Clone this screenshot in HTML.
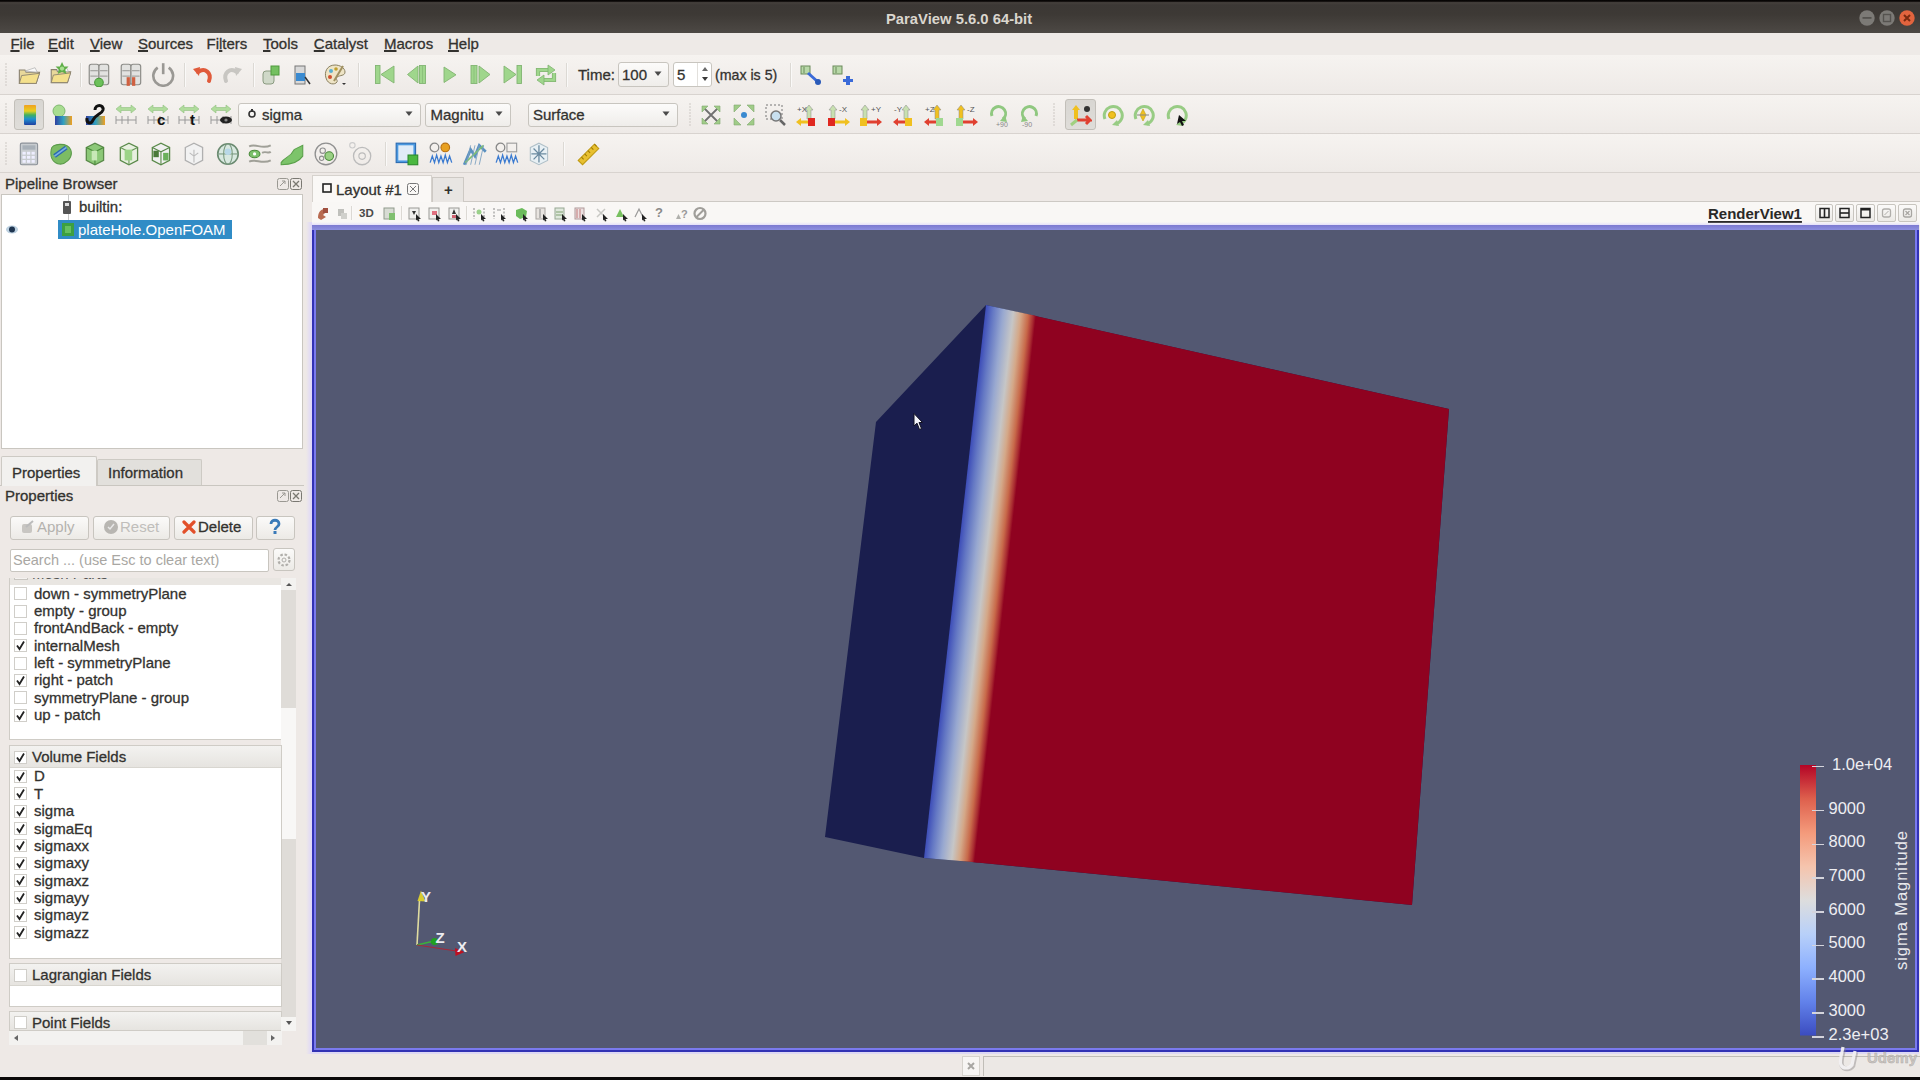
<!DOCTYPE html>
<html><head><meta charset="utf-8"><style>
html,body{margin:0;padding:0;width:1920px;height:1080px;overflow:hidden;background:#eee9e6;font-family:"Liberation Sans", sans-serif;}
u{text-decoration:underline;text-decoration-thickness:2.2px;text-underline-offset:0.5px;}
</style></head><body>
<div style="position:absolute;left:0px;top:0px;width:1920px;height:33px;background:linear-gradient(#060404 0px,#0a0706 1.2px,#45403c 2.6px,#3c3835 5px,#3d3935 14px,#4b4743 31px,#4d4945 33px);"></div><div style="position:absolute;left:886px;top:10.6px;font-size:14.8px;line-height:17.0px;height:17.0px;color:#dad6ce;font-weight:700;white-space:pre;">ParaView 5.6.0 64-bit</div><svg style="position:absolute;left:1858.2px;top:9px;" width="18" height="18" viewBox="0 0 18 18"><circle cx="9" cy="9" r="7.7" fill="#7c7a76"/><rect x="4.5" y="8" width="9" height="1.8" fill="#55534f"/></svg><svg style="position:absolute;left:1878.2px;top:9px;" width="18" height="18" viewBox="0 0 18 18"><circle cx="9" cy="9" r="7.7" fill="#7c7a76"/><rect x="5.5" y="5.5" width="7" height="7" fill="none" stroke="#55534f" stroke-width="1.4"/></svg><svg style="position:absolute;left:1898.3px;top:9px;" width="18" height="18" viewBox="0 0 18 18"><circle cx="9" cy="9" r="7.7" fill="#e2643e"/><path d="M6 6 L12 12 M12 6 L6 12" stroke="#7a2a10" stroke-width="2"/></svg><div style="position:absolute;left:0px;top:33px;width:1920px;height:22px;background:#eeeae7;"></div><div style="position:absolute;left:10.4px;top:34.9px;font-size:15px;line-height:17.2px;height:17.2px;color:#33322f;font-weight:400;white-space:pre;-webkit-text-stroke:0.3px #33322f;"><u>F</u>ile</div><div style="position:absolute;left:48px;top:34.9px;font-size:15px;line-height:17.2px;height:17.2px;color:#33322f;font-weight:400;white-space:pre;-webkit-text-stroke:0.3px #33322f;"><u>E</u>dit</div><div style="position:absolute;left:90px;top:34.9px;font-size:15px;line-height:17.2px;height:17.2px;color:#33322f;font-weight:400;white-space:pre;-webkit-text-stroke:0.3px #33322f;"><u>V</u>iew</div><div style="position:absolute;left:138px;top:34.9px;font-size:15px;line-height:17.2px;height:17.2px;color:#33322f;font-weight:400;white-space:pre;-webkit-text-stroke:0.3px #33322f;"><u>S</u>ources</div><div style="position:absolute;left:206.5px;top:34.9px;font-size:15px;line-height:17.2px;height:17.2px;color:#33322f;font-weight:400;white-space:pre;-webkit-text-stroke:0.3px #33322f;">Fi<u>l</u>ters</div><div style="position:absolute;left:263px;top:34.9px;font-size:15px;line-height:17.2px;height:17.2px;color:#33322f;font-weight:400;white-space:pre;-webkit-text-stroke:0.3px #33322f;"><u>T</u>ools</div><div style="position:absolute;left:313.8px;top:34.9px;font-size:15px;line-height:17.2px;height:17.2px;color:#33322f;font-weight:400;white-space:pre;-webkit-text-stroke:0.3px #33322f;"><u>C</u>atalyst</div><div style="position:absolute;left:384px;top:34.9px;font-size:15px;line-height:17.2px;height:17.2px;color:#33322f;font-weight:400;white-space:pre;-webkit-text-stroke:0.3px #33322f;"><u>M</u>acros</div><div style="position:absolute;left:448px;top:34.9px;font-size:15px;line-height:17.2px;height:17.2px;color:#33322f;font-weight:400;white-space:pre;-webkit-text-stroke:0.3px #33322f;"><u>H</u>elp</div><div style="position:absolute;left:0px;top:55px;width:1920px;height:39px;background:linear-gradient(#f6f3f0,#eeeae7);border-bottom:1px solid #d8d3cf;"></div><div style="position:absolute;left:0px;top:95px;width:1920px;height:38px;background:linear-gradient(#f6f3f0,#eeeae7);border-bottom:1px solid #d8d3cf;"></div><div style="position:absolute;left:0px;top:134px;width:1920px;height:38px;background:linear-gradient(#f6f3f0,#eeeae7);border-bottom:1px solid #d8d3cf;"></div><svg style="position:absolute;left:4px;top:62px;" width="4" height="26" viewBox="0 0 4 26"><circle cx="2" cy="2" r="0.8" fill="#c8c5c0"/><circle cx="2" cy="5" r="0.8" fill="#c8c5c0"/><circle cx="2" cy="8" r="0.8" fill="#c8c5c0"/><circle cx="2" cy="11" r="0.8" fill="#c8c5c0"/><circle cx="2" cy="14" r="0.8" fill="#c8c5c0"/><circle cx="2" cy="17" r="0.8" fill="#c8c5c0"/><circle cx="2" cy="20" r="0.8" fill="#c8c5c0"/><circle cx="2" cy="23" r="0.8" fill="#c8c5c0"/></svg><svg style="position:absolute;left:15.56px;top:61.06px;" width="26.88" height="26.88" viewBox="0 0 24 24"><path d="M3 8 L3 20 L18 20 L21 10 L9 10 L8 8Z" fill="#e8d89a" stroke="#8a8270" stroke-width="1"/><path d="M5 13 L21 11 L18 20 L3 20Z" fill="#f4e08c" stroke="#8a8270" stroke-width="0.8"/><path d="M8 9 L17 6 L19 10Z" fill="#fafafa" stroke="#aaa" stroke-width="0.6"/></svg><svg style="position:absolute;left:48.04px;top:61.04px;" width="25.92" height="25.92" viewBox="0 0 24 24"><path d="M3 8 L3 20 L18 20 L21 10 L9 10 L8 8Z" fill="#e8d89a" stroke="#8a8270" stroke-width="1"/><path d="M5 13 L21 11 L18 20 L3 20Z" fill="#f4e08c" stroke="#8a8270" stroke-width="0.8"/><path d="M8 9 L17 6 L19 10Z" fill="#fafafa" stroke="#aaa" stroke-width="0.6"/><path d="M13 1 L15 5 L19 5 L16 8 L17 12 L13 10 L9 12 L10 8 L7 5 L11 5Z" fill="#5fae48"/><circle cx="13" cy="7" r="2" fill="#a8e090"/></svg><div style="position:absolute;left:80px;top:63px;width:1px;height:24px;background:#dcd9d4;"></div><div style="position:absolute;left:81px;top:63px;width:1px;height:24px;background:#faf9f8;"></div><svg style="position:absolute;left:86.04px;top:61.04px;" width="25.92" height="25.92" viewBox="0 0 24 24"><rect x="3" y="3" width="9" height="19" rx="2" fill="#e2e2e0" stroke="#8c8c88" stroke-width="1.1"/><line x1="4" y1="9" x2="11" y2="9" stroke="#9c9c98"/><line x1="4" y1="14" x2="11" y2="14" stroke="#9c9c98"/><rect x="12" y="3" width="9" height="19" rx="2" fill="#e2e2e0" stroke="#8c8c88" stroke-width="1.1"/><line x1="13" y1="9" x2="20" y2="9" stroke="#9c9c98"/><line x1="13" y1="14" x2="20" y2="14" stroke="#9c9c98"/><circle cx="12" cy="20" r="4" fill="#6cc05a" stroke="#4a9a3a"/></svg><svg style="position:absolute;left:118.04px;top:61.04px;" width="25.92" height="25.92" viewBox="0 0 24 24"><rect x="3" y="3" width="9" height="19" rx="2" fill="#e2e2e0" stroke="#8c8c88" stroke-width="1.1"/><line x1="4" y1="9" x2="11" y2="9" stroke="#9c9c98"/><line x1="4" y1="14" x2="11" y2="14" stroke="#9c9c98"/><rect x="12" y="3" width="9" height="19" rx="2" fill="#e2e2e0" stroke="#8c8c88" stroke-width="1.1"/><line x1="13" y1="9" x2="20" y2="9" stroke="#9c9c98"/><line x1="13" y1="14" x2="20" y2="14" stroke="#9c9c98"/><rect x="8" y="15" width="3" height="8" fill="#d06040"/><rect x="13" y="15" width="3" height="8" fill="#d06040"/></svg><svg style="position:absolute;left:150.30px;top:60.80px;" width="26.40" height="26.40" viewBox="0 0 24 24"><path d="M7 6 A9 9 0 1 0 17 6" fill="none" stroke="#9a9894" stroke-width="2.4"/><line x1="12" y1="2" x2="12" y2="12" stroke="#9a9894" stroke-width="2.4"/></svg><div style="position:absolute;left:184px;top:63px;width:1px;height:24px;background:#dcd9d4;"></div><div style="position:absolute;left:185px;top:63px;width:1px;height:24px;background:#faf9f8;"></div><svg style="position:absolute;left:189.70px;top:62.50px;" width="24.00" height="24.00" viewBox="0 0 24 24"><path d="M19 18 C22 10 15 4 8 9" fill="none" stroke="#e05a3a" stroke-width="4" stroke-linecap="round"/><path d="M3 6 L10 4 L9 13Z" fill="#e05a3a"/></svg><svg style="position:absolute;left:220.60px;top:62.50px;" width="24.00" height="24.00" viewBox="0 0 24 24"><path d="M5 18 C2 10 9 4 16 9" fill="none" stroke="#c8c6c2" stroke-width="4" stroke-linecap="round"/><path d="M21 6 L14 4 L15 13Z" fill="#c8c6c2"/></svg><div style="position:absolute;left:253px;top:63px;width:1px;height:24px;background:#dcd9d4;"></div><div style="position:absolute;left:254px;top:63px;width:1px;height:24px;background:#faf9f8;"></div><svg style="position:absolute;left:259.00px;top:62.50px;" width="24.00" height="24.00" viewBox="0 0 24 24"><rect x="4" y="8" width="11" height="13" rx="3" fill="#cfd8c8" stroke="#8a9a80"/><rect x="12" y="3" width="8" height="9" fill="#74c060" stroke="#4f9a3c"/></svg><svg style="position:absolute;left:290.00px;top:62.50px;" width="24.00" height="24.00" viewBox="0 0 24 24"><rect x="5" y="3" width="10" height="18" fill="#d8d8d8" stroke="#777"/><rect x="6" y="10" width="9" height="8" fill="#3a8ad0"/><path d="M15 14 L20 21" stroke="#333" stroke-width="1.5"/></svg><svg style="position:absolute;left:323.00px;top:62.50px;" width="24.00" height="24.00" viewBox="0 0 24 24"><path d="M12 2 C4 2 1 9 3 15 C5 22 12 22 14 19 C15 17 12 16 14 14 C17 12 22 13 22 9 C22 5 17 2 12 2Z" fill="#eee4c6" stroke="#8a8060"/><circle cx="8" cy="8" r="2" fill="#5ab0d0"/><circle cx="13" cy="6" r="1.8" fill="#c0a030"/><circle cx="7" cy="14" r="2" fill="#d05030"/><path d="M20 3 L11 18" stroke="#a09060" stroke-width="2"/><path d="M19 20 L23 20 L21 22Z" fill="#333"/></svg><div style="position:absolute;left:358px;top:63px;width:1px;height:24px;background:#dcd9d4;"></div><div style="position:absolute;left:359px;top:63px;width:1px;height:24px;background:#faf9f8;"></div><svg style="position:absolute;left:372.50px;top:62.50px;" width="23.00" height="23.00" viewBox="0 0 23 23"><rect x="2.5" y="2.5" width="4.5" height="18" fill="#9fd68c" stroke="#82b472" stroke-width="0.9"/><path d="M21 3 L21 20 L8 11.5Z" fill="#9fd68c" stroke="#82b472" stroke-width="0.9"/></svg><svg style="position:absolute;left:405.50px;top:62.50px;" width="23.00" height="23.00" viewBox="0 0 23 23"><path d="M12 3 L12 20 L1.5 11.5Z" fill="#9fd68c" stroke="#82b472" stroke-width="0.9"/><rect x="13.5" y="2.5" width="6" height="18" fill="#9fd68c" stroke="#82b472" stroke-width="0.9"/><line x1="16.5" y1="3" x2="16.5" y2="20" stroke="#82b472" stroke-width="0.6"/></svg><svg style="position:absolute;left:437.50px;top:62.50px;" width="23.00" height="23.00" viewBox="0 0 23 23"><path d="M6 4 L6 19.5 L18 11.8Z" fill="#9fd68c" stroke="#82b472" stroke-width="0.9"/></svg><svg style="position:absolute;left:468.50px;top:62.50px;" width="23.00" height="23.00" viewBox="0 0 23 23"><rect x="2" y="2.5" width="6" height="18" fill="#9fd68c" stroke="#82b472" stroke-width="0.9"/><line x1="5" y1="3" x2="5" y2="20" stroke="#82b472" stroke-width="0.6"/><path d="M10 3 L10 20 L21 11.5Z" fill="#9fd68c" stroke="#82b472" stroke-width="0.9"/></svg><svg style="position:absolute;left:500.50px;top:62.50px;" width="23.00" height="23.00" viewBox="0 0 23 23"><path d="M3 3 L3 20 L15 11.5Z" fill="#9fd68c" stroke="#82b472" stroke-width="0.9"/><rect x="16" y="2.5" width="4.5" height="18" fill="#9fd68c" stroke="#82b472" stroke-width="0.9"/></svg><svg style="position:absolute;left:533.50px;top:62.50px;" width="23.00" height="23.00" viewBox="0 0 23 23"><path d="M4 13 L4 7 L15 7" fill="none" stroke="#82b472" stroke-width="4.2"/><path d="M4 13 L4 7 L15 7" fill="none" stroke="#9fd68c" stroke-width="2.6"/><path d="M20 10 L20 17 L9 17" fill="none" stroke="#82b472" stroke-width="4.2"/><path d="M20 10 L20 17 L9 17" fill="none" stroke="#9fd68c" stroke-width="2.6"/><path d="M14 2 L21 7 L14 12Z" fill="#9fd68c" stroke="#82b472" stroke-width="0.8"/><path d="M10 12 L3 17 L10 22Z" fill="#9fd68c" stroke="#82b472" stroke-width="0.8"/></svg><div style="position:absolute;left:566px;top:63px;width:1px;height:24px;background:#dcd9d4;"></div><div style="position:absolute;left:567px;top:63px;width:1px;height:24px;background:#faf9f8;"></div><div style="position:absolute;left:578px;top:65.9px;font-size:15px;line-height:17.2px;height:17.2px;color:#33322f;font-weight:400;white-space:pre;-webkit-text-stroke:0.3px #33322f;">Time:</div><div style="position:absolute;left:617.5px;top:62px;width:51.5px;height:25px;background:linear-gradient(#fcfbfa,#efedea);border:1px solid #c8c5bf;border-radius:3px;box-sizing:border-box;"></div><div style="position:absolute;left:622px;top:65.9px;font-size:15px;line-height:17.2px;height:17.2px;color:#33322f;font-weight:400;white-space:pre;-webkit-text-stroke:0.3px #33322f;">100</div><svg style="position:absolute;left:654px;top:71px;" width="8" height="6" viewBox="0 0 8 6"><path d="M0.5 0.5 L7.5 0.5 L4 5Z" fill="#4a4a4a"/></svg><div style="position:absolute;left:673px;top:62px;width:39px;height:25px;background:#fff;border:1px solid #c8c5bf;border-radius:3px;box-sizing:border-box;"></div><div style="position:absolute;left:697px;top:63px;width:1px;height:23px;background:#e2e0dc;"></div><div style="position:absolute;left:677px;top:65.9px;font-size:15px;line-height:17.2px;height:17.2px;color:#33322f;font-weight:400;white-space:pre;-webkit-text-stroke:0.3px #33322f;">5</div><svg style="position:absolute;left:699px;top:64px;" width="12" height="20" viewBox="0 0 12 20"><path d="M3 7 L6 3 L9 7Z" fill="#6a6a6a"/><path d="M3 13 L6 17 L9 13Z" fill="#3a3a3a"/></svg><div style="position:absolute;left:715px;top:66.6px;font-size:14.2px;line-height:16.3px;height:16.3px;color:#33322f;font-weight:400;white-space:pre;-webkit-text-stroke:0.3px #33322f;">(max is 5)</div><div style="position:absolute;left:790px;top:63px;width:1px;height:24px;background:#dcd9d4;"></div><div style="position:absolute;left:791px;top:63px;width:1px;height:24px;background:#faf9f8;"></div><svg style="position:absolute;left:799.00px;top:62.50px;" width="24.00" height="24.00" viewBox="0 0 24 24"><rect x="2" y="3" width="9" height="8" fill="#b8d8a8" stroke="#6a8a5a"/><line x1="5" y1="4" x2="5" y2="10" stroke="#6a8a5a"/><path d="M9 10 L19 19" stroke="#3a6ad8" stroke-width="3"/><circle cx="19" cy="19" r="3" fill="#2a5ab8"/></svg><svg style="position:absolute;left:831.00px;top:62.50px;" width="24.00" height="24.00" viewBox="0 0 24 24"><rect x="2" y="3" width="9" height="8" fill="#b8d8a8" stroke="#6a8a5a"/><line x1="5" y1="4" x2="5" y2="10" stroke="#6a8a5a"/><path d="M15 13 L19 13 L19 16 L22 16 L22 19 L19 19 L19 22 L15 22 L15 19 L12 19 L12 16 L15 16Z" fill="#3a6ad8"/></svg><svg style="position:absolute;left:4px;top:102px;" width="4" height="26" viewBox="0 0 4 26"><circle cx="2" cy="2" r="0.8" fill="#c8c5c0"/><circle cx="2" cy="5" r="0.8" fill="#c8c5c0"/><circle cx="2" cy="8" r="0.8" fill="#c8c5c0"/><circle cx="2" cy="11" r="0.8" fill="#c8c5c0"/><circle cx="2" cy="14" r="0.8" fill="#c8c5c0"/><circle cx="2" cy="17" r="0.8" fill="#c8c5c0"/><circle cx="2" cy="20" r="0.8" fill="#c8c5c0"/><circle cx="2" cy="23" r="0.8" fill="#c8c5c0"/></svg><div style="position:absolute;left:14px;top:99px;width:30px;height:31px;background:linear-gradient(#d8d6d2,#dfddd9);border:1px solid #c2bfb9;border-radius:3px;box-sizing:border-box;"></div><svg style="position:absolute;left:17.50px;top:102.70px;" width="24.00" height="24.00" viewBox="0 0 24 24"><defs><linearGradient id="rb" x1="0" y1="0" x2="0" y2="1"><stop offset="0" stop-color="#f0a020"/><stop offset="0.3" stop-color="#e8d020"/><stop offset="0.5" stop-color="#40b060"/><stop offset="0.7" stop-color="#2090d0"/><stop offset="1" stop-color="#2040a0"/></linearGradient></defs><rect x="6" y="2" width="12" height="20" rx="1" fill="url(#rb)"/></svg><svg style="position:absolute;left:50.00px;top:102.70px;" width="24.00" height="24.00" viewBox="0 0 24 24"><circle cx="9" cy="8" r="6" fill="#a8dc90" stroke="#80b870"/><defs><linearGradient id="rb2" x1="0" y1="0" x2="1" y2="0"><stop offset="0" stop-color="#3040a0"/><stop offset="0.5" stop-color="#30a0c0"/><stop offset="1" stop-color="#f0a020"/></linearGradient></defs><rect x="5" y="13" width="17" height="9" fill="url(#rb2)"/></svg><svg style="position:absolute;left:82.70px;top:102.70px;" width="24.00" height="24.00" viewBox="0 0 24 24"><defs><linearGradient id="rb3" x1="0" y1="0" x2="1" y2="0"><stop offset="0" stop-color="#3040a0"/><stop offset="0.5" stop-color="#30a0c0"/><stop offset="1" stop-color="#f0a020"/></linearGradient></defs><rect x="3" y="13" width="19" height="9" fill="url(#rb3)"/><path d="M12 7 C12 1 21 1 20 7 C19 11 13 11 10 17 C8 22 3 20 4 15" fill="none" stroke="#111" stroke-width="3"/></svg><svg style="position:absolute;left:113.70px;top:102.70px;" width="24.00" height="24.00" viewBox="0 0 24 24"><path d="M2 6 L7 2 L7 4.5 L17 4.5 L17 2 L22 6 L17 10 L17 7.5 L7 7.5 L7 10Z" fill="#b0dc9c" stroke="#90c080" stroke-width="0.6"/><line x1="2" y1="17" x2="22" y2="17" stroke="#999"/><line x1="2" y1="13" x2="2" y2="21" stroke="#999"/><line x1="8" y1="13" x2="8" y2="21" stroke="#999"/><line x1="14" y1="13" x2="14" y2="21" stroke="#999"/><line x1="22" y1="13" x2="22" y2="21" stroke="#999"/></svg><svg style="position:absolute;left:145.60px;top:102.70px;" width="24.00" height="24.00" viewBox="0 0 24 24"><path d="M2 6 L7 2 L7 4.5 L17 4.5 L17 2 L22 6 L17 10 L17 7.5 L7 7.5 L7 10Z" fill="#b0dc9c" stroke="#90c080" stroke-width="0.6"/><line x1="2" y1="17" x2="22" y2="17" stroke="#999"/><line x1="2" y1="13" x2="2" y2="21" stroke="#999"/><line x1="8" y1="13" x2="8" y2="21" stroke="#999"/><line x1="14" y1="13" x2="14" y2="21" stroke="#999"/><line x1="22" y1="13" x2="22" y2="21" stroke="#999"/><text x="11" y="22" font-size="15" font-weight="700" fill="#111" font-family="Liberation Sans">c</text></svg><svg style="position:absolute;left:176.50px;top:102.70px;" width="24.00" height="24.00" viewBox="0 0 24 24"><path d="M2 6 L7 2 L7 4.5 L17 4.5 L17 2 L22 6 L17 10 L17 7.5 L7 7.5 L7 10Z" fill="#b0dc9c" stroke="#90c080" stroke-width="0.6"/><line x1="2" y1="17" x2="22" y2="17" stroke="#999"/><line x1="2" y1="13" x2="2" y2="21" stroke="#999"/><line x1="8" y1="13" x2="8" y2="21" stroke="#999"/><line x1="14" y1="13" x2="14" y2="21" stroke="#999"/><line x1="22" y1="13" x2="22" y2="21" stroke="#999"/><text x="13" y="22" font-size="15" font-weight="700" fill="#111" font-family="Liberation Sans">t</text></svg><svg style="position:absolute;left:209.40px;top:102.70px;" width="24.00" height="24.00" viewBox="0 0 24 24"><path d="M2 6 L7 2 L7 4.5 L17 4.5 L17 2 L22 6 L17 10 L17 7.5 L7 7.5 L7 10Z" fill="#b0dc9c" stroke="#90c080" stroke-width="0.6"/><line x1="2" y1="17" x2="22" y2="17" stroke="#999"/><line x1="2" y1="13" x2="2" y2="21" stroke="#999"/><line x1="8" y1="13" x2="8" y2="21" stroke="#999"/><line x1="14" y1="13" x2="14" y2="21" stroke="#999"/><line x1="22" y1="13" x2="22" y2="21" stroke="#999"/><ellipse cx="17" cy="17" rx="6" ry="3.5" fill="#222"/><circle cx="17" cy="17" r="1.6" fill="#888"/></svg><div style="position:absolute;left:237.5px;top:102.5px;width:183px;height:24.5px;background:linear-gradient(#fcfbfa,#efedea);border:1px solid #c8c5bf;border-radius:3px;box-sizing:border-box;"></div><svg style="position:absolute;left:247px;top:109px;" width="10" height="10" viewBox="0 0 10 10"><circle cx="5" cy="5" r="3" fill="none" stroke="#333" stroke-width="1.6"/><rect x="4" y="0" width="2" height="3" fill="#333"/></svg><div style="position:absolute;left:262px;top:105.9px;font-size:15px;line-height:17.2px;height:17.2px;color:#33322f;font-weight:400;white-space:pre;-webkit-text-stroke:0.3px #33322f;">sigma</div><svg style="position:absolute;left:405px;top:111px;" width="8" height="6" viewBox="0 0 8 6"><path d="M0.5 0.5 L7.5 0.5 L4 5Z" fill="#4a4a4a"/></svg><div style="position:absolute;left:425px;top:102.5px;width:86px;height:24.5px;background:linear-gradient(#fcfbfa,#efedea);border:1px solid #c8c5bf;border-radius:3px;box-sizing:border-box;"></div><div style="position:absolute;left:430.5px;top:105.9px;font-size:15px;line-height:17.2px;height:17.2px;color:#33322f;font-weight:400;white-space:pre;-webkit-text-stroke:0.3px #33322f;">Magnitu</div><svg style="position:absolute;left:495px;top:111px;" width="8" height="6" viewBox="0 0 8 6"><path d="M0.5 0.5 L7.5 0.5 L4 5Z" fill="#4a4a4a"/></svg><div style="position:absolute;left:528px;top:102.5px;width:150px;height:24.5px;background:linear-gradient(#fcfbfa,#efedea);border:1px solid #c8c5bf;border-radius:3px;box-sizing:border-box;"></div><div style="position:absolute;left:533px;top:105.9px;font-size:15px;line-height:17.2px;height:17.2px;color:#33322f;font-weight:400;white-space:pre;-webkit-text-stroke:0.3px #33322f;">Surface</div><svg style="position:absolute;left:662px;top:111px;" width="8" height="6" viewBox="0 0 8 6"><path d="M0.5 0.5 L7.5 0.5 L4 5Z" fill="#4a4a4a"/></svg><svg style="position:absolute;left:688px;top:102px;" width="4" height="26" viewBox="0 0 4 26"><circle cx="2" cy="2" r="0.8" fill="#c8c5c0"/><circle cx="2" cy="5" r="0.8" fill="#c8c5c0"/><circle cx="2" cy="8" r="0.8" fill="#c8c5c0"/><circle cx="2" cy="11" r="0.8" fill="#c8c5c0"/><circle cx="2" cy="14" r="0.8" fill="#c8c5c0"/><circle cx="2" cy="17" r="0.8" fill="#c8c5c0"/><circle cx="2" cy="20" r="0.8" fill="#c8c5c0"/><circle cx="2" cy="23" r="0.8" fill="#c8c5c0"/></svg><svg style="position:absolute;left:699.00px;top:102.70px;" width="24.00" height="24.00" viewBox="0 0 24 24"><path d="M4 4 L20 20 M20 4 L4 20" stroke="#707070" stroke-width="1.8"/><path d="M3 3 l6 0 l-6 6Z" fill="#a0cc88" stroke="#80a870" stroke-width="0.6" transform="rotate(0 3 3)"/><path d="M21 3 l6 0 l-6 6Z" fill="#a0cc88" stroke="#80a870" stroke-width="0.6" transform="rotate(90 21 3)"/><path d="M21 21 l6 0 l-6 6Z" fill="#a0cc88" stroke="#80a870" stroke-width="0.6" transform="rotate(180 21 21)"/><path d="M3 21 l6 0 l-6 6Z" fill="#a0cc88" stroke="#80a870" stroke-width="0.6" transform="rotate(270 3 21)"/></svg><svg style="position:absolute;left:731.70px;top:102.70px;" width="24.00" height="24.00" viewBox="0 0 24 24"><circle cx="12" cy="12" r="3" fill="#3a8ad0"/><path d="M2 2 l7 0 l-7 7Z" fill="#a0cc88" stroke="#80a870" stroke-width="0.6" transform="rotate(0 2 2)"/><path d="M22 2 l7 0 l-7 7Z" fill="#a0cc88" stroke="#80a870" stroke-width="0.6" transform="rotate(90 22 2)"/><path d="M22 22 l7 0 l-7 7Z" fill="#a0cc88" stroke="#80a870" stroke-width="0.6" transform="rotate(180 22 22)"/><path d="M2 22 l7 0 l-7 7Z" fill="#a0cc88" stroke="#80a870" stroke-width="0.6" transform="rotate(270 2 22)"/></svg><svg style="position:absolute;left:764.00px;top:102.70px;" width="24.00" height="24.00" viewBox="0 0 24 24"><rect x="2" y="2" width="16" height="14" fill="none" stroke="#777" stroke-dasharray="2 2"/><circle cx="12" cy="13" r="5" fill="#c8e0f0" stroke="#777" stroke-width="1.5"/><path d="M16 17 L21 22" stroke="#666" stroke-width="2.5"/></svg><svg style="position:absolute;left:795.00px;top:102.70px;" width="24.00" height="24.00" viewBox="0 0 24 24"><path d="M14 2 L18 7 L16 7 L16 16 L12 16 L12 7 L10 7Z" fill="#c8e0b0" stroke="#888" stroke-width="0.5"/><path d="M1 19 L6 15 L6 17.5 L14 17.5 L14 20.5 L6 20.5 L6 23Z" fill="#f0c020"/><rect x="13" y="15" width="7" height="8" fill="#e02820"/><text x="2" y="9" font-size="8" fill="#555" font-family="Liberation Sans">+X</text></svg><svg style="position:absolute;left:826.50px;top:102.70px;" width="24.00" height="24.00" viewBox="0 0 24 24"><path d="M6 2 L10 7 L8 7 L8 16 L4 16 L4 7 L2 7Z" fill="#c8e0b0" stroke="#888" stroke-width="0.5"/><rect x="1" y="15" width="7" height="8" fill="#e02820"/><path d="M23 19 L18 15 L18 17.5 L8 17.5 L8 20.5 L18 20.5 L18 23Z" fill="#f0c020"/><text x="12" y="9" font-size="8" fill="#555" font-family="Liberation Sans">-X</text></svg><svg style="position:absolute;left:859.00px;top:102.70px;" width="24.00" height="24.00" viewBox="0 0 24 24"><path d="M6 2 L10 7 L8 7 L8 16 L4 16 L4 7 L2 7Z" fill="#c8e0b0" stroke="#888" stroke-width="0.5"/><rect x="1" y="15" width="7" height="8" fill="#f0c020"/><path d="M23 19 L18 15 L18 17.5 L8 17.5 L8 20.5 L18 20.5 L18 23Z" fill="#e04030"/><text x="12" y="9" font-size="8" fill="#555" font-family="Liberation Sans">+Y</text></svg><svg style="position:absolute;left:891.60px;top:102.70px;" width="24.00" height="24.00" viewBox="0 0 24 24"><path d="M14 2 L18 7 L16 7 L16 16 L12 16 L12 7 L10 7Z" fill="#c8e0b0" stroke="#888" stroke-width="0.5"/><path d="M1 19 L6 15 L6 17.5 L14 17.5 L14 20.5 L6 20.5 L6 23Z" fill="#e04030"/><rect x="13" y="15" width="7" height="8" fill="#f0c020"/><text x="2" y="9" font-size="8" fill="#555" font-family="Liberation Sans">-Y</text></svg><svg style="position:absolute;left:922.70px;top:102.70px;" width="24.00" height="24.00" viewBox="0 0 24 24"><path d="M14 2 L18 7 L16 7 L16 16 L12 16 L12 7 L10 7Z" fill="#f0c020" stroke="#888" stroke-width="0.5"/><path d="M1 19 L6 15 L6 17.5 L14 17.5 L14 20.5 L6 20.5 L6 23Z" fill="#e04030"/><rect x="13" y="15" width="7" height="8" fill="#a0d890"/><text x="2" y="9" font-size="8" fill="#555" font-family="Liberation Sans">+Z</text></svg><svg style="position:absolute;left:955.00px;top:102.70px;" width="24.00" height="24.00" viewBox="0 0 24 24"><path d="M6 2 L10 7 L8 7 L8 16 L4 16 L4 7 L2 7Z" fill="#f0c020" stroke="#888" stroke-width="0.5"/><rect x="1" y="15" width="7" height="8" fill="#a0d890"/><path d="M23 19 L18 15 L18 17.5 L8 17.5 L8 20.5 L18 20.5 L18 23Z" fill="#e04030"/><text x="12" y="9" font-size="8" fill="#555" font-family="Liberation Sans">-Z</text></svg><svg style="position:absolute;left:986.40px;top:102.70px;" width="24.00" height="24.00" viewBox="0 0 24 24"><path d="M6 13 A7 7 0 1 1 17 16" fill="none" stroke="#90c880" stroke-width="3"/><path d="M14 18 L21 19 L19 12Z" fill="#90c880"/><text x="10" y="24" font-size="7" fill="#888" font-family="Liberation Sans">+90</text></svg><svg style="position:absolute;left:1017.60px;top:102.70px;" width="24.00" height="24.00" viewBox="0 0 24 24"><path d="M18 13 A7 7 0 1 0 7 16" fill="none" stroke="#90c880" stroke-width="3"/><path d="M10 18 L3 19 L5 12Z" fill="#90c880"/><text x="4" y="24" font-size="7" fill="#888" font-family="Liberation Sans">-90</text></svg><svg style="position:absolute;left:1052px;top:102px;" width="4" height="26" viewBox="0 0 4 26"><circle cx="2" cy="2" r="0.8" fill="#c8c5c0"/><circle cx="2" cy="5" r="0.8" fill="#c8c5c0"/><circle cx="2" cy="8" r="0.8" fill="#c8c5c0"/><circle cx="2" cy="11" r="0.8" fill="#c8c5c0"/><circle cx="2" cy="14" r="0.8" fill="#c8c5c0"/><circle cx="2" cy="17" r="0.8" fill="#c8c5c0"/><circle cx="2" cy="20" r="0.8" fill="#c8c5c0"/><circle cx="2" cy="23" r="0.8" fill="#c8c5c0"/></svg><div style="position:absolute;left:1064.5px;top:99px;width:31.5px;height:31px;background:linear-gradient(#d8d6d2,#dfddd9);border:1px solid #c2bfb9;border-radius:3px;box-sizing:border-box;"></div><svg style="position:absolute;left:1067.70px;top:102.70px;" width="24.00" height="24.00" viewBox="0 0 24 24"><path d="M8 2 L12 7 L10 7 L10 16 L6 16 L6 7 L4 7Z" fill="#f0c020"/><path d="M9 17 L22 17 L18 13 M22 17 L18 21" stroke="#e04030" stroke-width="3" fill="none"/><path d="M9 17 L3 22" stroke="#a0d080" stroke-width="3"/><circle cx="19" cy="6" r="3" fill="#333"/></svg><svg style="position:absolute;left:1100.00px;top:102.70px;" width="24.00" height="24.00" viewBox="0 0 24 24"><path d="M5 16 A9 9 0 1 1 16 21" fill="none" stroke="#98cc84" stroke-width="3"/><path d="M12 22 L19 23 L17 17Z" fill="#98cc84"/><circle cx="12" cy="12" r="3.5" fill="#f0c020" stroke="#c0a010"/></svg><svg style="position:absolute;left:1131.40px;top:102.70px;" width="24.00" height="24.00" viewBox="0 0 24 24"><path d="M5 16 A9 9 0 1 1 16 21" fill="none" stroke="#98cc84" stroke-width="3"/><path d="M12 22 L19 23 L17 17Z" fill="#98cc84"/><path d="M12 6 L15 12 L12 18 L9 12Z" fill="#f0c020" stroke="#c0a010" stroke-width="0.6"/><path d="M6 12 L18 12" stroke="#888"/></svg><svg style="position:absolute;left:1164.00px;top:102.70px;" width="24.00" height="24.00" viewBox="0 0 24 24"><path d="M5 16 A9 9 0 1 1 16 21" fill="none" stroke="#98cc84" stroke-width="3"/><path d="M12 22 L19 23 L17 17Z" fill="#98cc84"/><path d="M15 12 L22 18 L18 18 L20 22 L18 23 L16 19 L13 21Z" fill="#111"/></svg><svg style="position:absolute;left:4px;top:141px;" width="4" height="26" viewBox="0 0 4 26"><circle cx="2" cy="2" r="0.8" fill="#c8c5c0"/><circle cx="2" cy="5" r="0.8" fill="#c8c5c0"/><circle cx="2" cy="8" r="0.8" fill="#c8c5c0"/><circle cx="2" cy="11" r="0.8" fill="#c8c5c0"/><circle cx="2" cy="14" r="0.8" fill="#c8c5c0"/><circle cx="2" cy="17" r="0.8" fill="#c8c5c0"/><circle cx="2" cy="20" r="0.8" fill="#c8c5c0"/><circle cx="2" cy="23" r="0.8" fill="#c8c5c0"/></svg><svg style="position:absolute;left:16.04px;top:140.54px;" width="25.92" height="25.92" viewBox="0 0 24 24"><rect x="4" y="2" width="16" height="20" rx="1.5" fill="#c8ccd0" stroke="#8a9098"/><rect x="6" y="4" width="12" height="4" fill="#a8b0b8"/><rect x="6.0" y="10.0" width="3" height="2.6" fill="#eef"/><rect x="6.0" y="13.8" width="3" height="2.6" fill="#eef"/><rect x="6.0" y="17.6" width="3" height="2.6" fill="#eef"/><rect x="10.2" y="10.0" width="3" height="2.6" fill="#eef"/><rect x="10.2" y="13.8" width="3" height="2.6" fill="#eef"/><rect x="10.2" y="17.6" width="3" height="2.6" fill="#eef"/><rect x="14.4" y="10.0" width="3" height="2.6" fill="#eef"/><rect x="14.4" y="13.8" width="3" height="2.6" fill="#eef"/><rect x="14.4" y="17.6" width="3" height="2.6" fill="#eef"/></svg><svg style="position:absolute;left:48.34px;top:140.54px;" width="25.92" height="25.92" viewBox="0 0 24 24"><path d="M3 8 C3 2 18 1 21 8 C24 16 15 23 9 21 C3 19 2 13 3 8Z" fill="#7cbc64" stroke="#5a9a4a"/><path d="M6 14 L17 6" stroke="#2a6ab0" stroke-width="4"/><path d="M6 14 L17 6" stroke="#7ab0e0" stroke-width="1.5"/></svg><svg style="position:absolute;left:82.34px;top:140.54px;" width="25.92" height="25.92" viewBox="0 0 24 24"><path d="M4 6 L12 2 L20 6 L20 18 L12 22 L4 18Z" fill="#8cc878" stroke="#5a8a4a" stroke-width="1.2"/><path d="M4 6 L12 10 L20 6 M12 10 L12 22" stroke="#4a8a3a" fill="none"/><rect x="9" y="9" width="5" height="9" fill="#c8e8b8"/></svg><svg style="position:absolute;left:115.54px;top:140.54px;" width="25.92" height="25.92" viewBox="0 0 24 24"><path d="M4 6 L12 2 L20 6 L20 18 L12 22 L4 18Z" fill="#e8f0e0" stroke="#5a8a4a" stroke-width="1.2"/><path d="M4 6 L12 10 L20 6 M12 10 L12 22" stroke="#6a9a5a" fill="none"/><path d="M8 8 L15 8 L15 18 L8 18Z" fill="#9cd488"/></svg><svg style="position:absolute;left:148.44px;top:140.54px;" width="25.92" height="25.92" viewBox="0 0 24 24"><path d="M4 6 L12 2 L20 6 L20 18 L12 22 L4 18Z" fill="#f0f0f0" stroke="#5a8a4a" stroke-width="1.2"/><path d="M4 6 L12 10 L20 6 M12 10 L12 22" stroke="#5a8a4a" fill="none"/><rect x="5" y="9" width="5" height="6" fill="#4a7a3a"/><rect x="14" y="11" width="5" height="7" fill="#6ab05a"/></svg><svg style="position:absolute;left:180.74px;top:140.54px;" width="25.92" height="25.92" viewBox="0 0 24 24"><path d="M4 6 L12 2 L20 6 L20 18 L12 22 L4 18Z" fill="#f2f2f2" stroke="#b0b0b0" stroke-width="1.2"/><path d="M12 8 L12 20 M8 11 L12 14 L16 11" stroke="#bbb" fill="none"/></svg><svg style="position:absolute;left:214.64px;top:140.54px;" width="25.92" height="25.92" viewBox="0 0 24 24"><circle cx="12" cy="12" r="9.5" fill="#d8e8e0" stroke="#6a8a70" stroke-width="1.5"/><ellipse cx="12" cy="12" rx="4" ry="9.5" fill="none" stroke="#7a9a80"/><line x1="2" y1="12" x2="22" y2="12" stroke="#7a9a80"/><circle cx="12" cy="10" r="3" fill="#b8d8e8"/></svg><svg style="position:absolute;left:247.04px;top:140.54px;" width="25.92" height="25.92" viewBox="0 0 24 24"><path d="M2 5 C8 2 14 8 22 4 M2 19 C8 16 14 22 22 18 M14 11 C17 9 20 12 22 10" stroke="#a0a098" stroke-width="1.8" fill="none"/><ellipse cx="7" cy="12" rx="5" ry="3.5" fill="#7ac06a" stroke="#4a8a3a"/><circle cx="7" cy="12" r="1.5" fill="#fff"/></svg><svg style="position:absolute;left:279.04px;top:140.54px;" width="25.92" height="25.92" viewBox="0 0 24 24"><path d="M2 20 C6 14 10 16 14 8 L22 4 L22 14 C18 20 10 22 2 22Z" fill="#7cc46a" stroke="#5aa04a"/></svg><svg style="position:absolute;left:313.04px;top:140.54px;" width="25.92" height="25.92" viewBox="0 0 24 24"><circle cx="12" cy="12" r="10" fill="none" stroke="#909090" stroke-width="1.2"/><circle cx="9" cy="9" r="2.5" fill="none" stroke="#909090"/><circle cx="15" cy="14" r="4" fill="#9ad084" stroke="#4a8a3a"/><circle cx="8" cy="16" r="2" fill="none" stroke="#909090"/></svg><svg style="position:absolute;left:347.04px;top:140.54px;" width="25.92" height="25.92" viewBox="0 0 24 24"><circle cx="14" cy="14" r="8" fill="none" stroke="#bbb" stroke-width="1.2"/><circle cx="14" cy="14" r="3" fill="none" stroke="#bbb"/><circle cx="5" cy="4" r="2.5" fill="none" stroke="#ccc"/></svg><div style="position:absolute;left:385px;top:142px;width:1px;height:24px;background:#dcd9d4;"></div><div style="position:absolute;left:386px;top:142px;width:1px;height:24px;background:#faf9f8;"></div><svg style="position:absolute;left:393.84px;top:140.54px;" width="25.92" height="25.92" viewBox="0 0 24 24"><rect x="2" y="2" width="18" height="18" fill="#4a98e0" stroke="#2a6ab0"/><rect x="4" y="4" width="14" height="14" fill="#e0ecf8"/><rect x="13" y="13" width="9" height="9" fill="#4ab840" stroke="#2a8a2a"/></svg><svg style="position:absolute;left:427.74px;top:140.54px;" width="25.92" height="25.92" viewBox="0 0 24 24"><circle cx="6" cy="6" r="4" fill="none" stroke="#888" stroke-width="1.2"/><circle cx="16" cy="6" r="4" fill="#e8a020" stroke="#b87010"/><path d="M2 20 L4 14 L6 20 L8 13 L10 20 L12 14 L14 20 L16 13 L18 20 L20 14 L22 20" stroke="#3a7ad0" fill="none" stroke-width="1.2"/></svg><svg style="position:absolute;left:461.64px;top:140.54px;" width="25.92" height="25.92" viewBox="0 0 24 24"><path d="M2 22 L8 8 L12 14 L16 4 L22 10" stroke="#5a90c0" stroke-width="2.5" fill="none"/><path d="M3 20 L20 4" stroke="#80c070" stroke-width="1.5"/><line x1="8" y1="4" x2="4" y2="22" stroke="#7aa0c0" stroke-width="0.8"/><line x1="12" y1="4" x2="8" y2="22" stroke="#7aa0c0" stroke-width="0.8"/><line x1="16" y1="4" x2="12" y2="22" stroke="#7aa0c0" stroke-width="0.8"/><line x1="20" y1="4" x2="16" y2="22" stroke="#7aa0c0" stroke-width="0.8"/></svg><svg style="position:absolute;left:494.04px;top:140.54px;" width="25.92" height="25.92" viewBox="0 0 24 24"><circle cx="6" cy="6" r="4" fill="none" stroke="#888" stroke-width="1.2"/><rect x="12" y="2" width="9" height="8" fill="none" stroke="#999"/><path d="M2 20 L4 14 L6 20 L8 13 L10 20 L12 14 L14 20 L16 13 L18 20 L20 14 L22 20" stroke="#3a7ad0" fill="none" stroke-width="1.2"/></svg><svg style="position:absolute;left:526.04px;top:140.54px;" width="25.92" height="25.92" viewBox="0 0 24 24"><path d="M4 6 L12 2 L20 6 L20 18 L12 22 L4 18Z" fill="#e8f0f4" stroke="#b0c0c8"/><path d="M12 4 L12 20 M5 12 L19 12 M7 7 L17 17 M17 7 L7 17" stroke="#6a8aa0" stroke-width="1.2"/></svg><div style="position:absolute;left:563px;top:142px;width:1px;height:24px;background:#dcd9d4;"></div><div style="position:absolute;left:564px;top:142px;width:1px;height:24px;background:#faf9f8;"></div><svg style="position:absolute;left:574.64px;top:140.54px;" width="25.92" height="25.92" viewBox="0 0 24 24"><path d="M3 18 L18 3 L22 7 L7 22Z" fill="#e8c030" stroke="#c09a10"/><line x1="6" y1="15" x2="8" y2="17" stroke="#a07a00"/><line x1="9" y1="12" x2="11" y2="14" stroke="#a07a00"/><line x1="12" y1="9" x2="14" y2="11" stroke="#a07a00"/><line x1="15" y1="6" x2="17" y2="8" stroke="#a07a00"/><line x1="18" y1="3" x2="20" y2="5" stroke="#a07a00"/></svg><div style="position:absolute;left:5px;top:175.4px;font-size:15px;line-height:17.2px;height:17.2px;color:#33322f;font-weight:400;white-space:pre;-webkit-text-stroke:0.3px #33322f;">Pipeline Browser</div><svg style="position:absolute;left:277px;top:178px;" width="26" height="13" viewBox="0 0 26 13"><rect x="0.5" y="0.5" width="11" height="11" rx="2" fill="none" stroke="#9a9892"/><path d="M3 8 L8 3 M5 3 H8 V6" stroke="#9a9892" fill="none"/><rect x="13.5" y="0.5" width="11" height="11" rx="2" fill="none" stroke="#7a7872"/><path d="M16 3 L22 9 M22 3 L16 9" stroke="#7a7872" fill="none" stroke-width="1.3"/></svg><div style="position:absolute;left:1px;top:194px;width:302px;height:255px;background:#ffffff;border:1px solid #c9c6c0;box-sizing:border-box;"></div><div style="position:absolute;left:68px;top:194px;width:1px;height:28px;background:#c8c8c8;"></div><svg style="position:absolute;left:62px;top:200px;" width="10" height="15" viewBox="0 0 10 15"><rect x="1" y="1" width="8" height="13" rx="1" fill="#555" /><rect x="3" y="3" width="4" height="3" fill="#ddd"/></svg><div style="position:absolute;left:79px;top:198.4px;font-size:15px;line-height:17.2px;height:17.2px;color:#33322f;font-weight:400;white-space:pre;-webkit-text-stroke:0.3px #33322f;">builtin:</div><div style="position:absolute;left:58px;top:220px;width:174px;height:19px;background:#308cc6;"></div><svg style="position:absolute;left:62px;top:223px;" width="12" height="13" viewBox="0 0 12 13"><rect x="0" y="0" width="12" height="13" fill="#3da040"/><rect x="3" y="3" width="6" height="7" fill="#66c060"/></svg><div style="position:absolute;left:78px;top:221.4px;font-size:15px;line-height:17.2px;height:17.2px;color:#ffffff;font-weight:400;white-space:pre;">plateHole.OpenFOAM</div><svg style="position:absolute;left:5px;top:224px;" width="14" height="11" viewBox="0 0 14 11"><ellipse cx="7" cy="5.5" rx="6" ry="4" fill="#bcd0e0"/><circle cx="7" cy="5.5" r="3" fill="#1f3550"/></svg><div style="position:absolute;left:0px;top:485px;width:304px;height:1px;background:#c9c6c0;"></div><div style="position:absolute;left:1px;top:456px;width:96px;height:30px;background:#f2f1ef;border:1px solid #cdcac4;border-bottom:none;box-sizing:border-box;border-radius:2px 2px 0 0;"></div><div style="position:absolute;left:97px;top:459px;width:105px;height:26px;background:#e2e0dc;border:1px solid #cdcac4;border-bottom:none;box-sizing:border-box;border-radius:2px 2px 0 0;"></div><div style="position:absolute;left:12px;top:463.9px;font-size:15px;line-height:17.2px;height:17.2px;color:#33322f;font-weight:400;white-space:pre;-webkit-text-stroke:0.3px #33322f;">Properties</div><div style="position:absolute;left:108px;top:463.9px;font-size:15px;line-height:17.2px;height:17.2px;color:#33322f;font-weight:400;white-space:pre;-webkit-text-stroke:0.3px #33322f;">Information</div><div style="position:absolute;left:5px;top:487.4px;font-size:15px;line-height:17.2px;height:17.2px;color:#33322f;font-weight:400;white-space:pre;-webkit-text-stroke:0.3px #33322f;">Properties</div><svg style="position:absolute;left:277px;top:490px;" width="26" height="13" viewBox="0 0 26 13"><rect x="0.5" y="0.5" width="11" height="11" rx="2" fill="none" stroke="#9a9892"/><path d="M3 8 L8 3 M5 3 H8 V6" stroke="#9a9892" fill="none"/><rect x="13.5" y="0.5" width="11" height="11" rx="2" fill="none" stroke="#7a7872"/><path d="M16 3 L22 9 M22 3 L16 9" stroke="#7a7872" fill="none" stroke-width="1.3"/></svg><div style="position:absolute;left:10px;top:516px;width:79px;height:24px;background:linear-gradient(#fbfaf9,#eceae6);border:1px solid #c8c5bf;border-radius:3px;box-sizing:border-box;"></div><div style="position:absolute;left:93px;top:516px;width:77px;height:24px;background:linear-gradient(#fbfaf9,#eceae6);border:1px solid #c8c5bf;border-radius:3px;box-sizing:border-box;"></div><div style="position:absolute;left:174px;top:516px;width:79px;height:24px;background:linear-gradient(#fbfaf9,#eceae6);border:1px solid #c8c5bf;border-radius:3px;box-sizing:border-box;"></div><div style="position:absolute;left:256px;top:516px;width:39px;height:24px;background:linear-gradient(#fbfaf9,#eceae6);border:1px solid #c8c5bf;border-radius:3px;box-sizing:border-box;"></div><svg style="position:absolute;left:20px;top:519px;" width="16" height="16" viewBox="0 0 16 16"><rect x="2" y="5" width="10" height="9" rx="2" fill="#c8c6c2"/><path d="M6 8 L13 2" stroke="#bbb" stroke-width="2"/></svg><div style="position:absolute;left:37px;top:518.4px;font-size:15px;line-height:17.2px;height:17.2px;color:#b4b2ae;font-weight:400;white-space:pre;">Apply</div><svg style="position:absolute;left:103px;top:519px;" width="16" height="16" viewBox="0 0 16 16"><circle cx="8" cy="8" r="7" fill="#b8b6b2"/><path d="M5 8 L7 10 L11 5" stroke="#e8e8e8" stroke-width="1.5" fill="none"/></svg><div style="position:absolute;left:120px;top:518.4px;font-size:15px;line-height:17.2px;height:17.2px;color:#c0bebb;font-weight:400;white-space:pre;">Reset</div><svg style="position:absolute;left:182px;top:520px;" width="14" height="14" viewBox="0 0 14 14"><path d="M2 2 L12 12 M12 2 L2 12" stroke="#e2502a" stroke-width="3.2" stroke-linecap="round"/></svg><div style="position:absolute;left:198px;top:518.4px;font-size:15px;line-height:17.2px;height:17.2px;color:#33322f;font-weight:400;white-space:pre;-webkit-text-stroke:0.3px #33322f;">Delete</div><svg style="position:absolute;left:268px;top:518px;" width="14" height="18" viewBox="0 0 14 18"><path d="M3 6 C3 1 11 1 11 6 C11 9 7 9 7 12" stroke="#3a7ab8" stroke-width="2.8" fill="none"/><rect x="5.5" y="13" width="3" height="3" fill="#3a7ab8"/></svg><div style="position:absolute;left:10px;top:549px;width:259px;height:23px;background:#fff;border:1px solid #c8c5bf;border-radius:2px;box-sizing:border-box;"></div><div style="position:absolute;left:13px;top:551.9px;font-size:14.5px;line-height:16.7px;height:16.7px;color:#a9a7a3;font-weight:400;white-space:pre;">Search ... (use Esc to clear text)</div><div style="position:absolute;left:273px;top:548px;width:22px;height:23px;background:linear-gradient(#fbfaf9,#eceae6);border:1px solid #c8c5bf;border-radius:3px;box-sizing:border-box;"></div><svg style="position:absolute;left:276px;top:552px;" width="16" height="16" viewBox="0 0 16 16"><circle cx="8" cy="8" r="5.5" fill="none" stroke="#b0aeaa" stroke-width="2.2" stroke-dasharray="2.5 1.8"/><circle cx="8" cy="8" r="2" fill="none" stroke="#b0aeaa"/></svg><div style="position:absolute;left:9px;top:578px;width:273px;height:162px;background:#fff;border:1px solid #cfccc6;box-sizing:border-box;"></div><div style="position:absolute;left:10px;top:578px;width:271px;height:7px;background:#e9e6e2;overflow:hidden;"><div style="position:absolute;left:4px;top:-12px;width:12px;height:12px;border:1px solid #c8c5c0;background:#f4f2f0;"></div><div style="position:absolute;left:22px;top:-12.5px;font-size:15px;line-height:15px;color:#555;white-space:pre;">Mesh Parts</div></div><div style="position:absolute;left:281px;top:578px;width:15px;height:12px;background:#f3f2f0;"></div><div style="position:absolute;left:281px;top:590px;width:15px;height:427px;background:#dfdcd8;"></div><div style="position:absolute;left:281px;top:708px;width:15px;height:131px;background:#f8f7f6;"></div><svg style="position:absolute;left:283px;top:580px;" width="12" height="8" viewBox="0 0 12 8"><path d="M3 6 L6 3 L9 6Z" fill="#555"/></svg><svg style="position:absolute;left:14px;top:587.2px;" width="13" height="13" viewBox="0 0 13 13"><rect x="0.5" y="0.5" width="12" height="12" fill="#fff" stroke="#d0cec9"/></svg><div style="position:absolute;left:34px;top:584.6px;font-size:15px;line-height:17.2px;height:17.2px;color:#33322f;font-weight:400;white-space:pre;-webkit-text-stroke:0.3px #33322f;">down - symmetryPlane</div><svg style="position:absolute;left:14px;top:604.5500000000001px;" width="13" height="13" viewBox="0 0 13 13"><rect x="0.5" y="0.5" width="12" height="12" fill="#fff" stroke="#d0cec9"/></svg><div style="position:absolute;left:34px;top:602.0px;font-size:15px;line-height:17.2px;height:17.2px;color:#33322f;font-weight:400;white-space:pre;-webkit-text-stroke:0.3px #33322f;">empty - group</div><svg style="position:absolute;left:14px;top:621.9000000000001px;" width="13" height="13" viewBox="0 0 13 13"><rect x="0.5" y="0.5" width="12" height="12" fill="#fff" stroke="#d0cec9"/></svg><div style="position:absolute;left:34px;top:619.3px;font-size:15px;line-height:17.2px;height:17.2px;color:#33322f;font-weight:400;white-space:pre;-webkit-text-stroke:0.3px #33322f;">frontAndBack - empty</div><svg style="position:absolute;left:14px;top:639.25px;" width="13" height="13" viewBox="0 0 13 13"><rect x="0.5" y="0.5" width="12" height="12" fill="#fff" stroke="#d0cec9"/><path d="M3 6.5 L5.5 10 L10 2.5" stroke="#222" stroke-width="1.8" fill="none"/></svg><div style="position:absolute;left:34px;top:636.7px;font-size:15px;line-height:17.2px;height:17.2px;color:#33322f;font-weight:400;white-space:pre;-webkit-text-stroke:0.3px #33322f;">internalMesh</div><svg style="position:absolute;left:14px;top:656.6px;" width="13" height="13" viewBox="0 0 13 13"><rect x="0.5" y="0.5" width="12" height="12" fill="#fff" stroke="#d0cec9"/></svg><div style="position:absolute;left:34px;top:654.0px;font-size:15px;line-height:17.2px;height:17.2px;color:#33322f;font-weight:400;white-space:pre;-webkit-text-stroke:0.3px #33322f;">left - symmetryPlane</div><svg style="position:absolute;left:14px;top:673.95px;" width="13" height="13" viewBox="0 0 13 13"><rect x="0.5" y="0.5" width="12" height="12" fill="#fff" stroke="#d0cec9"/><path d="M3 6.5 L5.5 10 L10 2.5" stroke="#222" stroke-width="1.8" fill="none"/></svg><div style="position:absolute;left:34px;top:671.4px;font-size:15px;line-height:17.2px;height:17.2px;color:#33322f;font-weight:400;white-space:pre;-webkit-text-stroke:0.3px #33322f;">right - patch</div><svg style="position:absolute;left:14px;top:691.3000000000001px;" width="13" height="13" viewBox="0 0 13 13"><rect x="0.5" y="0.5" width="12" height="12" fill="#fff" stroke="#d0cec9"/></svg><div style="position:absolute;left:34px;top:688.7px;font-size:15px;line-height:17.2px;height:17.2px;color:#33322f;font-weight:400;white-space:pre;-webkit-text-stroke:0.3px #33322f;">symmetryPlane - group</div><svg style="position:absolute;left:14px;top:708.6500000000001px;" width="13" height="13" viewBox="0 0 13 13"><rect x="0.5" y="0.5" width="12" height="12" fill="#fff" stroke="#d0cec9"/><path d="M3 6.5 L5.5 10 L10 2.5" stroke="#222" stroke-width="1.8" fill="none"/></svg><div style="position:absolute;left:34px;top:706.1px;font-size:15px;line-height:17.2px;height:17.2px;color:#33322f;font-weight:400;white-space:pre;-webkit-text-stroke:0.3px #33322f;">up - patch</div><div style="position:absolute;left:9px;top:745px;width:273px;height:214px;background:#fff;border:1px solid #cfccc6;box-sizing:border-box;"></div><div style="position:absolute;left:10px;top:746px;width:271px;height:22px;background:linear-gradient(#f3f2f0,#e6e4e0);border-bottom:1px solid #d8d6d0;box-sizing:border-box;"></div><svg style="position:absolute;left:14px;top:751px;" width="13" height="13" viewBox="0 0 13 13"><rect x="0.5" y="0.5" width="12" height="12" fill="#fff" stroke="#d0cec9"/><path d="M3 6.5 L5.5 10 L10 2.5" stroke="#222" stroke-width="1.8" fill="none"/></svg><div style="position:absolute;left:32px;top:748.4px;font-size:15px;line-height:17.2px;height:17.2px;color:#33322f;font-weight:400;white-space:pre;-webkit-text-stroke:0.3px #33322f;">Volume Fields</div><svg style="position:absolute;left:14px;top:770.0px;" width="13" height="13" viewBox="0 0 13 13"><rect x="0.5" y="0.5" width="12" height="12" fill="#fff" stroke="#d0cec9"/><path d="M3 6.5 L5.5 10 L10 2.5" stroke="#222" stroke-width="1.8" fill="none"/></svg><div style="position:absolute;left:34px;top:767.4px;font-size:15px;line-height:17.2px;height:17.2px;color:#33322f;font-weight:400;white-space:pre;-webkit-text-stroke:0.3px #33322f;">D</div><svg style="position:absolute;left:14px;top:787.35px;" width="13" height="13" viewBox="0 0 13 13"><rect x="0.5" y="0.5" width="12" height="12" fill="#fff" stroke="#d0cec9"/><path d="M3 6.5 L5.5 10 L10 2.5" stroke="#222" stroke-width="1.8" fill="none"/></svg><div style="position:absolute;left:34px;top:784.8px;font-size:15px;line-height:17.2px;height:17.2px;color:#33322f;font-weight:400;white-space:pre;-webkit-text-stroke:0.3px #33322f;">T</div><svg style="position:absolute;left:14px;top:804.7px;" width="13" height="13" viewBox="0 0 13 13"><rect x="0.5" y="0.5" width="12" height="12" fill="#fff" stroke="#d0cec9"/><path d="M3 6.5 L5.5 10 L10 2.5" stroke="#222" stroke-width="1.8" fill="none"/></svg><div style="position:absolute;left:34px;top:802.1px;font-size:15px;line-height:17.2px;height:17.2px;color:#33322f;font-weight:400;white-space:pre;-webkit-text-stroke:0.3px #33322f;">sigma</div><svg style="position:absolute;left:14px;top:822.05px;" width="13" height="13" viewBox="0 0 13 13"><rect x="0.5" y="0.5" width="12" height="12" fill="#fff" stroke="#d0cec9"/><path d="M3 6.5 L5.5 10 L10 2.5" stroke="#222" stroke-width="1.8" fill="none"/></svg><div style="position:absolute;left:34px;top:819.5px;font-size:15px;line-height:17.2px;height:17.2px;color:#33322f;font-weight:400;white-space:pre;-webkit-text-stroke:0.3px #33322f;">sigmaEq</div><svg style="position:absolute;left:14px;top:839.4px;" width="13" height="13" viewBox="0 0 13 13"><rect x="0.5" y="0.5" width="12" height="12" fill="#fff" stroke="#d0cec9"/><path d="M3 6.5 L5.5 10 L10 2.5" stroke="#222" stroke-width="1.8" fill="none"/></svg><div style="position:absolute;left:34px;top:836.8px;font-size:15px;line-height:17.2px;height:17.2px;color:#33322f;font-weight:400;white-space:pre;-webkit-text-stroke:0.3px #33322f;">sigmaxx</div><svg style="position:absolute;left:14px;top:856.75px;" width="13" height="13" viewBox="0 0 13 13"><rect x="0.5" y="0.5" width="12" height="12" fill="#fff" stroke="#d0cec9"/><path d="M3 6.5 L5.5 10 L10 2.5" stroke="#222" stroke-width="1.8" fill="none"/></svg><div style="position:absolute;left:34px;top:854.2px;font-size:15px;line-height:17.2px;height:17.2px;color:#33322f;font-weight:400;white-space:pre;-webkit-text-stroke:0.3px #33322f;">sigmaxy</div><svg style="position:absolute;left:14px;top:874.1px;" width="13" height="13" viewBox="0 0 13 13"><rect x="0.5" y="0.5" width="12" height="12" fill="#fff" stroke="#d0cec9"/><path d="M3 6.5 L5.5 10 L10 2.5" stroke="#222" stroke-width="1.8" fill="none"/></svg><div style="position:absolute;left:34px;top:871.5px;font-size:15px;line-height:17.2px;height:17.2px;color:#33322f;font-weight:400;white-space:pre;-webkit-text-stroke:0.3px #33322f;">sigmaxz</div><svg style="position:absolute;left:14px;top:891.45px;" width="13" height="13" viewBox="0 0 13 13"><rect x="0.5" y="0.5" width="12" height="12" fill="#fff" stroke="#d0cec9"/><path d="M3 6.5 L5.5 10 L10 2.5" stroke="#222" stroke-width="1.8" fill="none"/></svg><div style="position:absolute;left:34px;top:888.9px;font-size:15px;line-height:17.2px;height:17.2px;color:#33322f;font-weight:400;white-space:pre;-webkit-text-stroke:0.3px #33322f;">sigmayy</div><svg style="position:absolute;left:14px;top:908.8px;" width="13" height="13" viewBox="0 0 13 13"><rect x="0.5" y="0.5" width="12" height="12" fill="#fff" stroke="#d0cec9"/><path d="M3 6.5 L5.5 10 L10 2.5" stroke="#222" stroke-width="1.8" fill="none"/></svg><div style="position:absolute;left:34px;top:906.2px;font-size:15px;line-height:17.2px;height:17.2px;color:#33322f;font-weight:400;white-space:pre;-webkit-text-stroke:0.3px #33322f;">sigmayz</div><svg style="position:absolute;left:14px;top:926.15px;" width="13" height="13" viewBox="0 0 13 13"><rect x="0.5" y="0.5" width="12" height="12" fill="#fff" stroke="#d0cec9"/><path d="M3 6.5 L5.5 10 L10 2.5" stroke="#222" stroke-width="1.8" fill="none"/></svg><div style="position:absolute;left:34px;top:923.6px;font-size:15px;line-height:17.2px;height:17.2px;color:#33322f;font-weight:400;white-space:pre;-webkit-text-stroke:0.3px #33322f;">sigmazz</div><div style="position:absolute;left:9px;top:963px;width:273px;height:44px;background:#fff;border:1px solid #cfccc6;box-sizing:border-box;"></div><div style="position:absolute;left:10px;top:964px;width:271px;height:22px;background:linear-gradient(#f3f2f0,#e6e4e0);border-bottom:1px solid #d8d6d0;box-sizing:border-box;"></div><svg style="position:absolute;left:14px;top:969px;" width="13" height="13" viewBox="0 0 13 13"><rect x="0.5" y="0.5" width="12" height="12" fill="#fff" stroke="#d0cec9"/></svg><div style="position:absolute;left:32px;top:966.4px;font-size:15px;line-height:17.2px;height:17.2px;color:#33322f;font-weight:400;white-space:pre;-webkit-text-stroke:0.3px #33322f;">Lagrangian Fields</div><div style="position:absolute;left:9px;top:1011px;width:273px;height:20px;background:linear-gradient(#f3f2f0,#e6e4e0);border:1px solid #cfccc6;box-sizing:border-box;"></div><svg style="position:absolute;left:14px;top:1016px;" width="13" height="13" viewBox="0 0 13 13"><rect x="0.5" y="0.5" width="12" height="12" fill="#fff" stroke="#d0cec9"/></svg><div style="position:absolute;left:32px;top:1014.4px;font-size:15px;line-height:17.2px;height:17.2px;color:#33322f;font-weight:400;white-space:pre;-webkit-text-stroke:0.3px #33322f;">Point Fields</div><div style="position:absolute;left:281px;top:1017px;width:15px;height:14px;background:#f5f4f2;"></div><svg style="position:absolute;left:283px;top:1018px;" width="12" height="10" viewBox="0 0 12 10"><path d="M3 3 L9 3 L6 7Z" fill="#555"/></svg><div style="position:absolute;left:9px;top:1031px;width:273px;height:14px;background:#f3f2f0;"></div><div style="position:absolute;left:243px;top:1031px;width:24px;height:14px;background:#e2e0dc;"></div><svg style="position:absolute;left:11px;top:1032px;" width="10" height="12" viewBox="0 0 10 12"><path d="M7 3 L7 9 L3 6Z" fill="#666"/></svg><svg style="position:absolute;left:268px;top:1032px;" width="10" height="12" viewBox="0 0 10 12"><path d="M3 3 L3 9 L7 6Z" fill="#666"/></svg><div style="position:absolute;left:312px;top:175px;width:120px;height:27px;background:#faf8f6;border:1px solid #d6d2cd;border-bottom:none;box-sizing:border-box;"></div><div style="position:absolute;left:432px;top:201px;width:1488px;height:1px;background:#cdc9c4;"></div><div style="position:absolute;left:432px;top:177px;width:32px;height:25px;background:#e8e5e2;border:1px solid #cdc9c4;border-bottom:none;box-sizing:border-box;"></div><svg style="position:absolute;left:322px;top:183px;" width="10" height="10" viewBox="0 0 10 10"><rect x="1" y="1" width="8" height="8" fill="none" stroke="#222" stroke-width="1.6"/></svg><div style="position:absolute;left:336px;top:181.4px;font-size:15px;line-height:17.2px;height:17.2px;color:#33322f;font-weight:400;white-space:pre;-webkit-text-stroke:0.3px #33322f;">Layout #1</div><svg style="position:absolute;left:407px;top:183px;" width="12" height="12" viewBox="0 0 12 12"><rect x="0.5" y="0.5" width="11" height="11" rx="2" fill="none" stroke="#777"/><path d="M3 3 L9 9 M9 3 L3 9" stroke="#777"/></svg><div style="position:absolute;left:444px;top:181.4px;font-size:15px;line-height:17.2px;height:17.2px;color:#33322f;font-weight:700;white-space:pre;">+</div><div style="position:absolute;left:312px;top:202px;width:1608px;height:23px;background:#f9f7f5;"></div><div style="position:absolute;left:1708px;top:205.4px;font-size:15px;line-height:17.2px;height:17.2px;color:#2a2927;font-weight:700;white-space:pre;text-decoration:underline;text-underline-offset:2px;text-decoration-thickness:2px;">RenderView1</div><div style="position:absolute;left:1814.6px;top:204.3px;width:18.7px;height:17.5px;background:linear-gradient(#fbfaf9,#eceae6);border:1px solid #c8c5bf;border-radius:3px;box-sizing:border-box;border-radius:2px;"></div><svg style="position:absolute;left:1814.6px;top:204.3px;" width="19" height="18" viewBox="0 0 19 18"><rect x="5" y="4.5" width="9" height="9" fill="none" stroke="#222" stroke-width="1.5"/><line x1="9.5" y1="4.5" x2="9.5" y2="13.5" stroke="#222" stroke-width="1.6"/></svg><div style="position:absolute;left:1835.4px;top:204.3px;width:18.7px;height:17.5px;background:linear-gradient(#fbfaf9,#eceae6);border:1px solid #c8c5bf;border-radius:3px;box-sizing:border-box;border-radius:2px;"></div><svg style="position:absolute;left:1835.4px;top:204.3px;" width="19" height="18" viewBox="0 0 19 18"><rect x="5" y="4.5" width="9" height="9" fill="none" stroke="#222" stroke-width="1.5"/><line x1="5" y1="9" x2="14" y2="9" stroke="#222" stroke-width="1.6"/></svg><div style="position:absolute;left:1856.3px;top:204.3px;width:18.7px;height:17.5px;background:linear-gradient(#fbfaf9,#eceae6);border:1px solid #c8c5bf;border-radius:3px;box-sizing:border-box;border-radius:2px;"></div><svg style="position:absolute;left:1856.3px;top:204.3px;" width="19" height="18" viewBox="0 0 19 18"><rect x="5" y="4.5" width="9" height="9" fill="none" stroke="#222" stroke-width="1.5"/><line x1="5" y1="5.5" x2="14" y2="5.5" stroke="#222" stroke-width="2"/></svg><div style="position:absolute;left:1877px;top:204.3px;width:18.7px;height:17.5px;background:linear-gradient(#fbfaf9,#eceae6);border:1px solid #c8c5bf;border-radius:3px;box-sizing:border-box;border-radius:2px;"></div><svg style="position:absolute;left:1877px;top:204.3px;" width="19" height="18" viewBox="0 0 19 18"><rect x="5.5" y="5" width="8" height="8" rx="2" fill="none" stroke="#b0aeaa" stroke-width="1.3"/><path d="M7.5 11 L11.5 7" stroke="#b0aeaa" fill="none"/></svg><div style="position:absolute;left:1898px;top:204.3px;width:18.7px;height:17.5px;background:linear-gradient(#fbfaf9,#eceae6);border:1px solid #c8c5bf;border-radius:3px;box-sizing:border-box;border-radius:2px;"></div><svg style="position:absolute;left:1898px;top:204.3px;" width="19" height="18" viewBox="0 0 19 18"><rect x="5.5" y="5" width="8" height="8" rx="2" fill="none" stroke="#a8a6a2" stroke-width="1.3"/><path d="M7.5 7 L11.5 11 M11.5 7 L7.5 11" stroke="#a8a6a2" stroke-width="1.3"/></svg><svg style="position:absolute;left:315px;top:205.5px;" width="15" height="16" viewBox="0 0 15 16"><path d="M3 12 C3 6 6 3 10 3 L12 5 L8 9 L11 11 L6 14Z" fill="#b86a50"/><rect x="8" y="2" width="5" height="5" fill="#a05040"/></svg><svg style="position:absolute;left:334.6px;top:205.5px;" width="15" height="16" viewBox="0 0 15 16"><rect x="3" y="3" width="6" height="7" fill="#c0c0bc"/><rect x="6" y="7" width="6" height="6" fill="#d0d0cc"/></svg><svg style="position:absolute;left:381.6px;top:205.5px;" width="15" height="16" viewBox="0 0 15 16"><rect x="2" y="2" width="10" height="11" fill="#d8dcd4" stroke="#909a8c"/><rect x="7" y="7" width="6" height="7" fill="#80c070"/></svg><svg style="position:absolute;left:406.8px;top:205.5px;" width="15" height="16" viewBox="0 0 15 16"><rect x="2" y="2" width="10" height="11" fill="#f0f0ee" stroke="#9a9a96" stroke-width="1"/><path d="M5 5 L9 5 L7 9Z" fill="#333"/><path d="M9 8 L14 13 L11.5 13 L12.5 15 L11 15.5 L10 13.5 L9 14.5Z" fill="#222"/></svg><svg style="position:absolute;left:426.5px;top:205.5px;" width="15" height="16" viewBox="0 0 15 16"><rect x="2" y="2" width="10" height="11" fill="#f0f0ee" stroke="#9a9a96" stroke-width="1"/><rect x="5" y="5" width="5" height="4" fill="#e07080"/><path d="M9 8 L14 13 L11.5 13 L12.5 15 L11 15.5 L10 13.5 L9 14.5Z" fill="#222"/></svg><svg style="position:absolute;left:447px;top:205.5px;" width="15" height="16" viewBox="0 0 15 16"><rect x="2" y="2" width="10" height="11" fill="#f0f0ee" stroke="#9a9a96" stroke-width="1"/><path d="M7 3 L9 8 L5 8Z" fill="#333"/><rect x="5" y="9" width="5" height="3" fill="#d06070"/><path d="M9 8 L14 13 L11.5 13 L12.5 15 L11 15.5 L10 13.5 L9 14.5Z" fill="#222"/></svg><svg style="position:absolute;left:472.4px;top:205.5px;" width="15" height="16" viewBox="0 0 15 16"><path d="M2 2 L2 13 M12 2 L12 13" stroke="#888" stroke-dasharray="2 1.5"/><circle cx="7" cy="6" r="2.5" fill="#9ad08a"/><path d="M9 8 L14 13 L11.5 13 L12.5 15 L11 15.5 L10 13.5 L9 14.5Z" fill="#222"/></svg><svg style="position:absolute;left:492px;top:205.5px;" width="15" height="16" viewBox="0 0 15 16"><path d="M2 2 L2 13 M12 2 L12 13" stroke="#888" stroke-dasharray="2 1.5"/><path d="M5 4 L9 4" stroke="#999"/><path d="M9 8 L14 13 L11.5 13 L12.5 15 L11 15.5 L10 13.5 L9 14.5Z" fill="#222"/></svg><svg style="position:absolute;left:514px;top:205.5px;" width="15" height="16" viewBox="0 0 15 16"><path d="M2 4 L8 2 L13 5 L12 11 L6 13 L2 10Z" fill="#6cbc5c"/><path d="M9 8 L14 13 L11.5 13 L12.5 15 L11 15.5 L10 13.5 L9 14.5Z" fill="#222"/></svg><svg style="position:absolute;left:533.7px;top:205.5px;" width="15" height="16" viewBox="0 0 15 16"><rect x="2" y="2" width="9" height="11" fill="#e8e4e0" stroke="#a8a4a0"/><path d="M6 3 L6 12" stroke="#888"/><path d="M9 8 L14 13 L11.5 13 L12.5 15 L11 15.5 L10 13.5 L9 14.5Z" fill="#222"/></svg><svg style="position:absolute;left:553.4px;top:205.5px;" width="15" height="16" viewBox="0 0 15 16"><rect x="2" y="2" width="9" height="11" fill="#dfe8dc" stroke="#98a894"/><path d="M3 6 L10 6 M3 9 L10 9" stroke="#80a070"/><path d="M9 8 L14 13 L11.5 13 L12.5 15 L11 15.5 L10 13.5 L9 14.5Z" fill="#222"/></svg><svg style="position:absolute;left:573px;top:205.5px;" width="15" height="16" viewBox="0 0 15 16"><rect x="2" y="2" width="9" height="11" fill="#ece0e0" stroke="#b09a9a"/><path d="M4 3 L4 12 M7 3 L7 12" stroke="#c07878"/><path d="M9 8 L14 13 L11.5 13 L12.5 15 L11 15.5 L10 13.5 L9 14.5Z" fill="#222"/></svg><svg style="position:absolute;left:593.9px;top:205.5px;" width="15" height="16" viewBox="0 0 15 16"><path d="M3 3 L11 11 M11 3 L3 11" stroke="#c8c8c4" stroke-width="1.5"/><path d="M9 8 L14 13 L11.5 13 L12.5 15 L11 15.5 L10 13.5 L9 14.5Z" fill="#222"/></svg><svg style="position:absolute;left:613.5px;top:205.5px;" width="15" height="16" viewBox="0 0 15 16"><path d="M2 11 L6 3 L10 11Z" fill="#78c060"/><path d="M9 8 L14 13 L11.5 13 L12.5 15 L11 15.5 L10 13.5 L9 14.5Z" fill="#222"/></svg><svg style="position:absolute;left:633px;top:205.5px;" width="15" height="16" viewBox="0 0 15 16"><path d="M2 11 L6 3 L10 11" fill="none" stroke="#999" stroke-width="1.2"/><path d="M9 8 L14 13 L11.5 13 L12.5 15 L11 15.5 L10 13.5 L9 14.5Z" fill="#222"/></svg><svg style="position:absolute;left:673.7px;top:205.5px;" width="15" height="16" viewBox="0 0 15 16"><path d="M2 13 L7 13 L4.5 8Z" fill="#b0b0ac"/><text x="7" y="12" font-size="11" font-weight="700" fill="#999" font-family="Liberation Sans">?</text></svg><svg style="position:absolute;left:693.4px;top:205.5px;" width="15" height="16" viewBox="0 0 15 16"><circle cx="7" cy="7.5" r="5.5" fill="none" stroke="#a09e9a" stroke-width="2.2"/><path d="M3.5 11 L10.5 4" stroke="#a09e9a" stroke-width="2"/></svg><div style="position:absolute;left:359px;top:206.6px;font-size:11.5px;line-height:13.2px;height:13.2px;color:#4a4a4a;font-weight:700;white-space:pre;">3D</div><div style="position:absolute;left:655px;top:205.7px;font-size:13px;line-height:14.9px;height:14.9px;color:#8a8a88;font-weight:700;white-space:pre;">?</div><div style="position:absolute;left:350.5px;top:206px;width:1px;height:14px;background:#dcd9d4;"></div><div style="position:absolute;left:351.5px;top:206px;width:1px;height:14px;background:#faf9f8;"></div><div style="position:absolute;left:401px;top:206px;width:1px;height:14px;background:#dcd9d4;"></div><div style="position:absolute;left:402px;top:206px;width:1px;height:14px;background:#faf9f8;"></div><div style="position:absolute;left:466px;top:206px;width:1px;height:14px;background:#dcd9d4;"></div><div style="position:absolute;left:467px;top:206px;width:1px;height:14px;background:#faf9f8;"></div><div style="position:absolute;left:312px;top:225px;width:1607px;height:827px;background:#535872;border:2px solid #3232b4;box-shadow:inset 0 0 0 2px #7a7aee;box-sizing:border-box;"></div><div style="position:absolute;left:312px;top:225px;width:1607px;height:4.5px;background:linear-gradient(#7c7ad0,#8e90e0);"></div><div style="position:absolute;left:312px;top:1052px;width:1607px;height:2px;background:#ddd8f4;"></div><div style="position:absolute;left:306px;top:222px;width:6px;height:832px;background:linear-gradient(90deg,rgba(238,233,246,0),#ddd6fa);"></div><div style="position:absolute;left:312px;top:222px;width:1607px;height:3px;background:linear-gradient(rgba(240,236,250,0),#e4e0fa);"></div><svg style="position:absolute;left:0;top:0" width="1920" height="1080" viewBox="0 0 1920 1080">
<defs>
<linearGradient id="cw" gradientUnits="userSpaceOnUse" x1="986" y1="305" x2="1036.6" y2="310.7">
<stop offset="0" stop-color="#3c4cb8"/>
<stop offset="0.15" stop-color="#6478c4"/>
<stop offset="0.35" stop-color="#98a8d0"/>
<stop offset="0.55" stop-color="#c6c6c6"/>
<stop offset="0.7" stop-color="#d4a888"/>
<stop offset="0.85" stop-color="#c86a4a"/>
<stop offset="0.95" stop-color="#a82a30"/>
<stop offset="1" stop-color="#8f0220"/>
</linearGradient>
</defs>
<polygon points="876,422 986,305 1449,409 1412,905 978,862.5 924,858 825,837" fill="#1a1e4e"/>
<polygon points="1030,314.7 1449,409 1412,905 972,862" fill="#8f0220"/>
<polygon points="986,305 1036.5,316.1 978.5,862.6 924,858" fill="url(#cw)"/>
</svg><svg style="position:absolute;left:1800px;top:765px;" width="16" height="271" viewBox="0 0 16 271"><defs><linearGradient id="cb" x1="0" y1="0" x2="0" y2="1"><stop offset="0.000" stop-color="rgb(180, 4, 38)"/><stop offset="0.125" stop-color="rgb(222, 96, 77)"/><stop offset="0.250" stop-color="rgb(244, 154, 123)"/><stop offset="0.375" stop-color="rgb(245, 196, 173)"/><stop offset="0.500" stop-color="rgb(221, 221, 221)"/><stop offset="0.625" stop-color="rgb(184, 208, 249)"/><stop offset="0.750" stop-color="rgb(141, 176, 254)"/><stop offset="0.875" stop-color="rgb(98, 130, 234)"/><stop offset="1.000" stop-color="rgb(59, 76, 192)"/></linearGradient></defs><rect x="0" y="0" width="16" height="270.5" fill="url(#cb)"/></svg><div style="position:absolute;left:1812px;top:765.95px;width:12px;height:1.5px;background:#d4d4dc;"></div><div style="position:absolute;left:1832px;top:754.6px;font-size:16.5px;line-height:19.0px;height:19.0px;color:#eeeef2;font-weight:400;white-space:pre;">1.0e+04</div><div style="position:absolute;left:1812px;top:809.95px;width:12px;height:1.5px;background:#d4d4dc;"></div><div style="position:absolute;left:1828.5px;top:798.6px;font-size:16.5px;line-height:19.0px;height:19.0px;color:#eeeef2;font-weight:400;white-space:pre;">9000</div><div style="position:absolute;left:1812px;top:843.65px;width:12px;height:1.5px;background:#d4d4dc;"></div><div style="position:absolute;left:1828.5px;top:832.3px;font-size:16.5px;line-height:19.0px;height:19.0px;color:#eeeef2;font-weight:400;white-space:pre;">8000</div><div style="position:absolute;left:1812px;top:877.35px;width:12px;height:1.5px;background:#d4d4dc;"></div><div style="position:absolute;left:1828.5px;top:866.0px;font-size:16.5px;line-height:19.0px;height:19.0px;color:#eeeef2;font-weight:400;white-space:pre;">7000</div><div style="position:absolute;left:1812px;top:911.05px;width:12px;height:1.5px;background:#d4d4dc;"></div><div style="position:absolute;left:1828.5px;top:899.7px;font-size:16.5px;line-height:19.0px;height:19.0px;color:#eeeef2;font-weight:400;white-space:pre;">6000</div><div style="position:absolute;left:1812px;top:944.75px;width:12px;height:1.5px;background:#d4d4dc;"></div><div style="position:absolute;left:1828.5px;top:933.4px;font-size:16.5px;line-height:19.0px;height:19.0px;color:#eeeef2;font-weight:400;white-space:pre;">5000</div><div style="position:absolute;left:1812px;top:978.45px;width:12px;height:1.5px;background:#d4d4dc;"></div><div style="position:absolute;left:1828.5px;top:967.1px;font-size:16.5px;line-height:19.0px;height:19.0px;color:#eeeef2;font-weight:400;white-space:pre;">4000</div><div style="position:absolute;left:1812px;top:1012.25px;width:12px;height:1.5px;background:#d4d4dc;"></div><div style="position:absolute;left:1828.5px;top:1000.9px;font-size:16.5px;line-height:19.0px;height:19.0px;color:#eeeef2;font-weight:400;white-space:pre;">3000</div><div style="position:absolute;left:1812px;top:1036.25px;width:12px;height:1.5px;background:#d4d4dc;"></div><div style="position:absolute;left:1828.5px;top:1024.9px;font-size:16.5px;line-height:19.0px;height:19.0px;color:#eeeef2;font-weight:400;white-space:pre;">2.3e+03</div><div style="position:absolute;left:1892.6px;top:970px;transform-origin:0 0;transform:rotate(-90deg);font-size:16.5px;line-height:16px;color:#e8e8ec;white-space:pre;letter-spacing:0.95px;">sigma Magnitude</div><svg style="position:absolute;left:0px;top:0px;left:0;top:0" width="1920" height="1080" viewBox="0 0 1920 1080">
<line x1="417" y1="945" x2="419.5" y2="900" stroke="#e0dca0" stroke-width="1.6"/>
<line x1="417" y1="945" x2="434" y2="941" stroke="#3cb03c" stroke-width="1.6"/>
<line x1="417" y1="945" x2="456" y2="951" stroke="#a82838" stroke-width="1.1"/>
<polygon points="417.5,901 421,890.5 425.5,901.5" fill="#d8cc30"/>
<circle cx="434.5" cy="941.5" r="3.6" fill="#20a020"/>
<polygon points="455,948 464.5,952 455.5,956" fill="#c01020"/>
</svg><div style="position:absolute;left:421px;top:888.4px;font-size:15px;line-height:17.2px;height:17.2px;color:#ececf0;font-weight:700;white-space:pre;">Y</div><div style="position:absolute;left:435.5px;top:928.9px;font-size:15px;line-height:17.2px;height:17.2px;color:#ececf0;font-weight:700;white-space:pre;">Z</div><div style="position:absolute;left:457px;top:938.4px;font-size:15px;line-height:17.2px;height:17.2px;color:#ececf0;font-weight:700;white-space:pre;">X</div><svg style="position:absolute;left:910px;top:410px;" width="16" height="24" viewBox="0 0 16 24"><path d="M4 3.5 L4 16 L7 13.2 L9.5 19.5 L11.5 18.6 L9 12.5 L12.5 12.5 Z" fill="#f4f4fa" stroke="#101020" stroke-width="1"/></svg><div style="position:absolute;left:962px;top:1056px;width:18px;height:20px;background:#f7f5f3;border:1px solid #d6d3cd;box-sizing:border-box;"></div><svg style="position:absolute;left:964px;top:1059px;" width="14" height="14" viewBox="0 0 14 14"><path d="M4 4 L10 10 M10 4 L4 10" stroke="#a8a6a2" stroke-width="2"/></svg><div style="position:absolute;left:983px;top:1056px;width:937px;height:20px;background:#ece8e5;border-top:1px solid #c0bdb7;border-left:1px solid #c0bdb7;box-sizing:border-box;"></div><div style="position:absolute;left:0px;top:1077px;width:1920px;height:3px;background:#0a0808;"></div><svg style="position:absolute;left:1834px;top:1044px;" width="30" height="30" viewBox="0 0 30 30"><g transform="translate(1,1)"><path d="M9 3 C8 9 5 17 7 21 C9 25 15 25 18 21 L21 7" fill="none" stroke="rgba(140,135,135,0.45)" stroke-width="4.5"/></g><path d="M9 3 C8 9 5 17 7 21 C9 25 15 25 18 21 L21 7" fill="none" stroke="rgba(246,244,246,0.9)" stroke-width="3.2"/></svg><div style="position:absolute;left:1867px;top:1050px;font-size:15px;line-height:15px;color:rgba(200,196,192,0.9);font-weight:700;-webkit-text-stroke:0.5px rgba(165,160,156,0.8);">Udemy</div>
</body></html>
